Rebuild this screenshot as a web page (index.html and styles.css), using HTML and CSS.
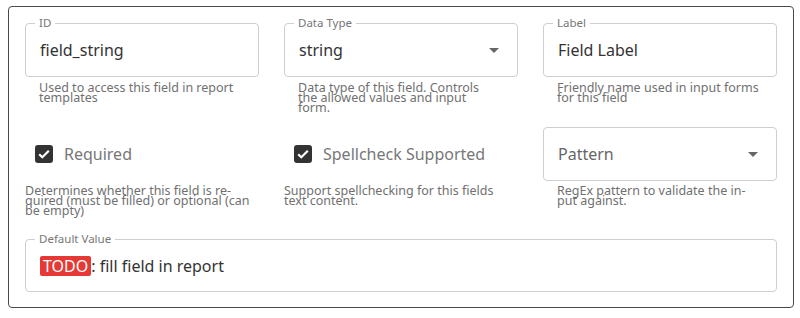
FILE: index.html
```html
<!DOCTYPE html>
<html lang="en">
<head>
<meta charset="utf-8">
<link rel="stylesheet" href="styles.css">
</head>
<body>
<div class="panel">
  <div class="grid">
    <div class="cell">
      <fieldset class="box"><legend>ID</legend><div class="inner"><span class="value">field_string</span></div></fieldset>
      <p class="help">Used to access this field in report tem&shy;plates</p>
    </div>
    <div class="cell">
      <fieldset class="box select"><legend>Data Type</legend><div class="inner"><span class="value">string</span><span class="arrow"></span></div></fieldset>
      <p class="help">Data type of this field. Con&shy;trols the al&shy;lowed values and in&shy;put form.</p>
    </div>
    <div class="cell">
      <fieldset class="box"><legend>Label</legend><div class="inner"><span class="value">Field Label</span></div></fieldset>
      <p class="help">Friendly name used in in&shy;put forms for this field</p>
    </div>

    <div class="cell row2">
      <label class="check"><span class="checkbox"><svg viewBox="0 0 18 18" width="18" height="18"><path d="M4.2 9.2l3.1 3.1 6.5-6.5" fill="none" stroke="#fff" stroke-width="2.2"/></svg></span><span class="check-label">Required</span></label>
      <p class="help flush">Determines whether this field is re&shy;quired (must be filled) or optional (can be empty)</p>
    </div>
    <div class="cell row2">
      <label class="check"><span class="checkbox"><svg viewBox="0 0 18 18" width="18" height="18"><path d="M4.2 9.2l3.1 3.1 6.5-6.5" fill="none" stroke="#fff" stroke-width="2.2"/></svg></span><span class="check-label">Spellcheck Supported</span></label>
      <p class="help flush">Support spellchecking for this fields text content.</p>
    </div>
    <div class="cell row2">
      <div class="box plain select"><span class="placeholder">Pattern</span><span class="arrow"></span></div>
      <p class="help">RegEx pattern to validate the in&shy;put against.</p>
    </div>

    <div class="cell wide">
      <fieldset class="box"><legend>Default Value</legend><div class="inner"><span class="value"><span class="todo">TODO</span>: fill field in report</span></div></fieldset>
    </div>
  </div>
</div>
</body>
</html>
```
FILE: styles.css
```css
* { box-sizing: border-box; }
html, body { margin: 0; padding: 0; background: #fff; }
body {
  font-family: "Noto Sans", "Open Sans", sans-serif;
  color: #333;
}
.panel {
  margin: 6px 6px 0 8px;
  width: 786px;
  height: 302px;
  border: 1px solid #4a4a4a;
  border-radius: 4px;
  padding: 9px 16px 0 16px;
}
.grid {
  display: grid;
  grid-template-columns: 234px 234px 234px;
  column-gap: 25px;
  grid-template-rows: 104px 112px 60px;
}
.cell { display: flex; flex-direction: column; min-width: 0; }
.row2 { padding-top: 7px; }
.wide { grid-column: 1 / 4; }
.box {
  margin: 0;
  border: 1px solid #cfcfcf;
  border-radius: 4px;
  padding: 0 14px;
  min-width: 0;
}
fieldset.box { height: 61px; padding-bottom: 0; }
.inner {
  height: 40px;
  display: flex;
  align-items: center;
}
.box.plain {
  height: 54px;
  display: flex;
  align-items: center;
}
legend {
  font-size: 11.5px;
  line-height: 14px;
  color: #777;
  margin-left: -5px;
  padding: 0 4px;
}
.value { font-size: 16px; color: #333; flex: 1; line-height: 20px; }
.placeholder { font-size: 16px; color: #666; flex: 1; line-height: 20px; }
.select { padding-right: 18px; }
.arrow {
  width: 0; height: 0;
  border-left: 5px solid transparent;
  border-right: 5px solid transparent;
  border-top: 5px solid #666;
}
.help {
  margin: 6px 0 0 0;
  padding: 0 16.5px 0 14px;
  font-size: 12.5px;
  line-height: 10px;
  color: #707070;
  hyphens: manual;
}
.help.flush { padding: 0; }
.row2 .help { margin-top: 5px; }
.check {
  height: 54px;
  display: flex;
  align-items: center;
  padding-left: 10px;
}
.checkbox {
  width: 18px; height: 18px;
  background: #333;
  border-radius: 3px;
  display: flex;
}
.check-label { margin-left: 11px; font-size: 16px; color: #777; }
.todo {
  display: inline-block;
  background: #e53935;
  color: #fff;
  border-radius: 2px;
  padding: 0 3px;
  line-height: 20px;
}
```
